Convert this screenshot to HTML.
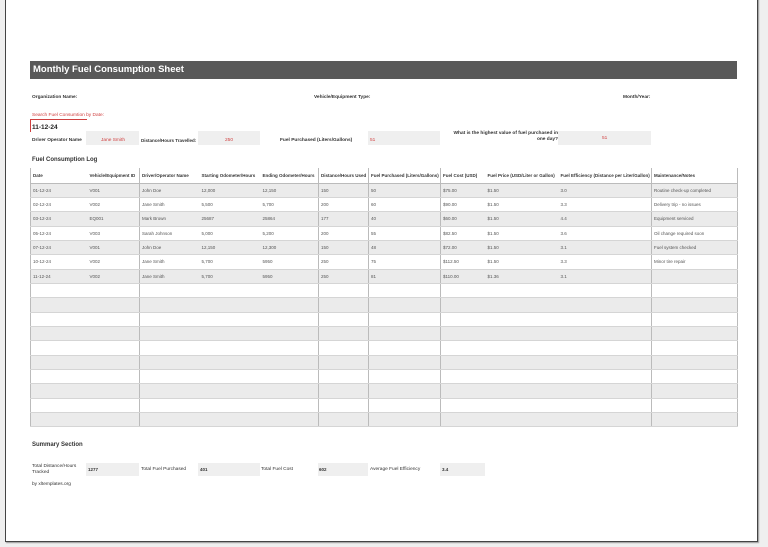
<!DOCTYPE html>
<html><head><style>
*{margin:0;padding:0;box-sizing:border-box}
body{width:768px;height:547px;background:#efefef;font-family:"Liberation Sans",sans-serif;position:relative;overflow:hidden;color:#333}
#page{position:absolute;left:5px;top:-2px;width:753px;height:544px;background:#fff;border:1px solid #444;box-shadow:1px 1px 1px #999}
.a{position:absolute;white-space:nowrap;font-size:4.8px;line-height:6px}
.b{font-weight:bold}
.r{color:#d04040}
.g{position:absolute;background:#efefef}
table{position:absolute;left:30px;top:168px;border-collapse:collapse;table-layout:fixed;width:707px}
td{font-size:4.5px;height:14.35px;padding:0 0 0 2px;white-space:nowrap;overflow:hidden;color:#555;vertical-align:middle}
tr.h td{height:15px;font-weight:bold;color:#333;border-bottom:1px solid #bbb}
tr:nth-child(even) td{background:#ebebeb}
tr td{border-bottom:1px solid #d5d5d5}
td.v{border-left:1px solid #bbb}
</style></head><body>
<div id="page"></div>
<div class="a b" style="left:30px;top:61px;width:707px;height:18px;background:#595959;color:#fff;font-size:9.5px;line-height:18px;padding-left:3px">Monthly Fuel Consumption Sheet</div>
<div class="a b" style="left:32px;top:95px">Organization Name:</div>
<div class="a b" style="left:314px;top:95px">Vehicle/Equipment Type:</div>
<div class="a b" style="left:623px;top:95px">Month/Year:</div>
<div class="a r" style="left:32px;top:113px">Search Fuel Consumtion by Date:</div>
<div style="position:absolute;left:30px;top:119px;width:57px;height:13px;border-top:1px solid #d04040;border-left:1px solid #d04040"></div>
<div class="a b" style="left:32px;top:124px;font-size:6.5px;line-height:8px;color:#222">11-12-24</div>
<div class="a b" style="left:32px;top:138px">Driver Operator Name</div>
<div class="g" style="left:86px;top:131px;width:53px;height:14px"></div>
<div class="a r" style="left:101px;top:138px">Jane Smith</div>
<div class="a b" style="left:141px;top:138px;font-size:4.5px">Distance/Hours Travelled:</div>
<div class="g" style="left:198px;top:131px;width:62px;height:14px"></div>
<div class="a r" style="left:225px;top:138px">250</div>
<div class="a b" style="left:280px;top:138px">Fuel Purchased (Liters/Gallons)</div>
<div class="g" style="left:368px;top:131px;width:72px;height:14px"></div>
<div class="a r" style="left:370px;top:138px">51</div>
<div class="a b" style="left:447px;top:131px;width:111px;white-space:normal;text-align:right">What is the highest value of fuel purchased in one day?</div>
<div class="g" style="left:558px;top:131px;width:93px;height:14px"></div>
<div class="a r" style="left:602px;top:136px">51</div>
<div class="a b" style="left:32px;top:157px;font-size:6px">Fuel Consumption Log</div>
<table>
<colgroup><col style="width:57px"><col style="width:52px"><col style="width:60px"><col style="width:61px"><col style="width:58px"><col style="width:50px"><col style="width:72px"><col style="width:45px"><col style="width:73px"><col style="width:93px"><col style="width:86px"></colgroup>
<tr class="h"><td class="v">Date</td><td>Vehicle/Equipment ID</td><td class="v">Driver/Operator Name</td><td>Starting Odometer/Hours</td><td>Ending Odometer/Hours</td><td class="v">Distance/Hours Used</td><td class="v">Fuel Purchased (Liters/Gallons)</td><td class="v">Fuel Cost (USD)</td><td>Fuel Price (USD/Liter or Gallon)</td><td>Fuel Efficiency (Distance per Liter/Gallon)</td><td class="v" style="border-right:1px solid #bbb">Maintenance/Notes</td></tr>
<tr><td class="v">01-12-24</td><td>V001</td><td class="v">John Doe</td><td>12,000</td><td>12,150</td><td class="v">150</td><td class="v">50</td><td class="v">$75.00</td><td>$1.50</td><td>3.0</td><td class="v" style="border-right:1px solid #bbb">Routine check-up completed</td></tr>
<tr><td class="v">02-12-24</td><td>V002</td><td class="v">Jane Smith</td><td>5,500</td><td>5,700</td><td class="v">200</td><td class="v">60</td><td class="v">$90.00</td><td>$1.50</td><td>3.3</td><td class="v" style="border-right:1px solid #bbb">Delivery trip - no issues</td></tr>
<tr><td class="v">03-12-24</td><td>EQ001</td><td class="v">Mark Brown</td><td>25687</td><td>25864</td><td class="v">177</td><td class="v">40</td><td class="v">$60.00</td><td>$1.50</td><td>4.4</td><td class="v" style="border-right:1px solid #bbb">Equipment serviced</td></tr>
<tr><td class="v">05-12-24</td><td>V003</td><td class="v">Sarah Johnson</td><td>5,000</td><td>5,200</td><td class="v">200</td><td class="v">55</td><td class="v">$82.50</td><td>$1.50</td><td>3.6</td><td class="v" style="border-right:1px solid #bbb">Oil change required soon</td></tr>
<tr><td class="v">07-12-24</td><td>V001</td><td class="v">John Doe</td><td>12,150</td><td>12,300</td><td class="v">150</td><td class="v">48</td><td class="v">$72.00</td><td>$1.50</td><td>3.1</td><td class="v" style="border-right:1px solid #bbb">Fuel system checked</td></tr>
<tr><td class="v">10-12-24</td><td>V002</td><td class="v">Jane Smith</td><td>5,700</td><td>5950</td><td class="v">250</td><td class="v">75</td><td class="v">$112.50</td><td>$1.50</td><td>3.3</td><td class="v" style="border-right:1px solid #bbb">Minor tire repair</td></tr>
<tr><td class="v">11-12-24</td><td>V002</td><td class="v">Jane Smith</td><td>5,700</td><td>5950</td><td class="v">250</td><td class="v">81</td><td class="v">$110.00</td><td>$1.36</td><td>3.1</td><td class="v" style="border-right:1px solid #bbb"></td></tr>
<tr><td class="v"></td><td></td><td class="v"></td><td></td><td></td><td class="v"></td><td class="v"></td><td class="v"></td><td></td><td></td><td class="v" style="border-right:1px solid #bbb"></td></tr>
<tr><td class="v"></td><td></td><td class="v"></td><td></td><td></td><td class="v"></td><td class="v"></td><td class="v"></td><td></td><td></td><td class="v" style="border-right:1px solid #bbb"></td></tr>
<tr><td class="v"></td><td></td><td class="v"></td><td></td><td></td><td class="v"></td><td class="v"></td><td class="v"></td><td></td><td></td><td class="v" style="border-right:1px solid #bbb"></td></tr>
<tr><td class="v"></td><td></td><td class="v"></td><td></td><td></td><td class="v"></td><td class="v"></td><td class="v"></td><td></td><td></td><td class="v" style="border-right:1px solid #bbb"></td></tr>
<tr><td class="v"></td><td></td><td class="v"></td><td></td><td></td><td class="v"></td><td class="v"></td><td class="v"></td><td></td><td></td><td class="v" style="border-right:1px solid #bbb"></td></tr>
<tr><td class="v"></td><td></td><td class="v"></td><td></td><td></td><td class="v"></td><td class="v"></td><td class="v"></td><td></td><td></td><td class="v" style="border-right:1px solid #bbb"></td></tr>
<tr><td class="v"></td><td></td><td class="v"></td><td></td><td></td><td class="v"></td><td class="v"></td><td class="v"></td><td></td><td></td><td class="v" style="border-right:1px solid #bbb"></td></tr>
<tr><td class="v"></td><td></td><td class="v"></td><td></td><td></td><td class="v"></td><td class="v"></td><td class="v"></td><td></td><td></td><td class="v" style="border-right:1px solid #bbb"></td></tr>
<tr><td class="v"></td><td></td><td class="v"></td><td></td><td></td><td class="v"></td><td class="v"></td><td class="v"></td><td></td><td></td><td class="v" style="border-right:1px solid #bbb"></td></tr>
<tr><td class="v"></td><td></td><td class="v"></td><td></td><td></td><td class="v"></td><td class="v"></td><td class="v"></td><td></td><td></td><td class="v" style="border-right:1px solid #bbb"></td></tr>
</table>
<div class="a b" style="left:32px;top:442px;font-size:6px">Summary Section</div>
<div class="a" style="left:32px;top:464px;line-height:6px">Total Distance/Hours<br>Tracked</div>
<div class="g" style="left:86px;top:463px;width:53px;height:13px"></div>
<div class="a b" style="left:88px;top:467px;font-size:4.5px">1277</div>
<div class="a" style="left:141px;top:467px">Total Fuel Purchased</div>
<div class="g" style="left:198px;top:463px;width:62px;height:13px"></div>
<div class="a b" style="left:200px;top:467px;font-size:4.5px">401</div>
<div class="a" style="left:261px;top:467px">Total Fuel Cost</div>
<div class="g" style="left:318px;top:463px;width:50px;height:13px"></div>
<div class="a b" style="left:319px;top:467px;font-size:4.5px">602</div>
<div class="a" style="left:370px;top:467px">Average Fuel Efficiency</div>
<div class="g" style="left:440px;top:463px;width:45px;height:13px"></div>
<div class="a b" style="left:442px;top:467px;font-size:4.5px">3.4</div>
<div class="a" style="left:32px;top:482px">by xltemplates.org</div>
</body></html>
